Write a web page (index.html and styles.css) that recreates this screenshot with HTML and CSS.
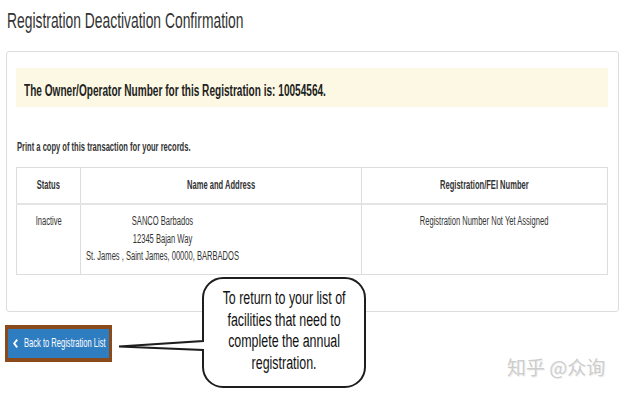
FILE: index.html
```html
<!DOCTYPE html>
<html lang="en">
<head>
<meta charset="utf-8">
<title>Registration Deactivation Confirmation</title>
<link rel="stylesheet" href="styles.css">
</head>
<body>
<h1 class="title"><span class="sx">Registration Deactivation Confirmation</span></h1>
<div class="panel">
  <div class="alert"><span class="sx">The Owner/Operator Number for this Registration is: 10054564.</span></div>
  <p class="note"><span class="sx">Print a copy of this transaction for your records.</span></p>
  <table class="grid">
    <colgroup>
      <col class="c-status">
      <col class="c-name">
      <col class="c-reg">
    </colgroup>
    <thead>
      <tr>
        <th><span class="sx mid">Status</span></th>
        <th><span class="sx mid">Name and Address</span></th>
        <th><span class="sx mid">Registration/FEI Number</span></th>
      </tr>
    </thead>
    <tbody>
      <tr>
        <td><span class="sx mid">Inactive</span></td>
        <td class="addr-cell"><div class="addr">SANCO Barbados<br>12345 Bajan Way<br>St. James , Saint James, 00000, BARBADOS</div></td>
        <td><span class="sx mid">Registration Number Not Yet Assigned</span></td>
      </tr>
    </tbody>
  </table>
</div>
<button class="back" type="button"><svg class="chev" viewBox="0 0 5 9" width="5" height="9"><polyline points="4.2,0.7 1.2,4.5 4.2,8.3" fill="none" stroke="#fff" stroke-width="1.9" stroke-linejoin="miter"/></svg><span class="sx back-label">Back to Registration List</span></button>

<div class="callout">
  <svg class="bubble" viewBox="0 0 250 113" width="250" height="113">
    <path d="M105,2 H227 A20,20 0 0 1 247,22 V91 A20,20 0 0 1 227,111 H105 A20,20 0 0 1 85,91 V74 L1,70.5 L85,65 V22 A20,20 0 0 1 105,2 Z" fill="#fff" stroke="#1e1e1e" stroke-width="2"/>
  </svg>
  <div class="callout-text">To return to your list of<br>facilities that need to<br>complete the annual<br>registration.</div>
</div>

<div class="watermark">知乎 @众询</div>
</body>
</html>
```

FILE: styles.css
```css
html {
  margin: 0;
  padding: 0;
  overflow: hidden;
}
body {
  margin: 0;
  padding: 0;
  position: relative;
  width: 621px;
  height: 394px;
  overflow: hidden;
  background: #fff;
  font-family: "Liberation Sans", Arial, sans-serif;
  color: #333;
}
.sx {
  display: inline-block;
  white-space: nowrap;
  transform: scaleX(0.63);
  transform-origin: 0 50%;
}
.sx.mid {
  transform-origin: 50% 50%;
}
.title {
  margin: 0 0 18px 7px;
  padding-top: 9px;
  font-size: 22px;
  line-height: 24px;
  font-weight: normal;
  color: #333;
}
.panel {
  box-sizing: border-box;
  width: 613px;
  margin-left: 6px;
  border: 1px solid #ddd;
  border-radius: 3px;
  padding: 16px 10px 16px 9px;
}
.alert {
  background: #fcf8e3;
  color: #222;
  font-weight: bold;
  font-size: 16px;
  line-height: 17px;
  padding: 14px 8px 8px 8px;
}
.note {
  margin: 32px 0 11px 1px;
  font-size: 12px;
  line-height: 17px;
  font-weight: bold;
  color: #333;
}
.grid {
  width: 100%;
  table-layout: fixed;
  border-collapse: collapse;
  margin-bottom: 20px;
  font-size: 12px;
  color: #333;
}
.c-status { width: 64px; }
.c-name { width: 281px; }
.c-reg { width: auto; }
.grid th, .grid td {
  border: 1px solid #ddd;
  text-align: center;
  vertical-align: top;
}
.grid th {
  padding: 9px 5px 9px 5px;
  line-height: 17px;
  font-weight: bold;
  border-bottom-width: 2px;
  border-bottom-color: #e4e4e4;
}
.grid td {
  padding: 8px 5px 8px 5px;
  line-height: 17.5px;
  font-weight: normal;
}
.grid td.addr-cell {
  text-align: left;
}
.addr {
  display: inline-block;
  text-align: center;
  white-space: nowrap;
  transform: scaleX(0.63);
  transform-origin: 0 0;
}
.back {
  display: flex;
  align-items: center;
  gap: 6.5px;
  box-sizing: border-box;
  width: 107px;
  height: 37px;
  margin: 13px 0 0 5px;
  padding: 0 0 0 4.8px;
  overflow: hidden;
  background: #2f7dc1;
  border-style: solid;
  border-color: #8a4a1c;
  border-width: 4px 3.3px;
  border-radius: 0;
  color: #fff;
  font-family: "Liberation Sans", Arial, sans-serif;
  font-size: 12px;
  line-height: 17px;
}
.chev {
  display: block;
  flex: none;
}
.back-label {
  flex: none;
}
.callout {
  position: absolute;
  left: 118px;
  top: 276px;
  width: 250px;
  height: 113px;
}
.bubble {
  display: block;
}
.callout-text {
  position: absolute;
  left: 85px;
  top: 12px;
  width: 235px;
  transform: scaleX(0.69);
  transform-origin: 0 0;
  text-align: center;
  font-size: 18px;
  line-height: 21.7px;
  color: #111;
}
.watermark {
  position: absolute;
  left: 507px;
  top: 356px;
  font-family: "Noto Sans CJK SC", "Noto Sans", sans-serif;
  font-size: 19px;
  line-height: 22px;
  color: #cdcdcd;
  text-shadow: 1px 1px 0 #f0f0f0;
  white-space: nowrap;
}
```
